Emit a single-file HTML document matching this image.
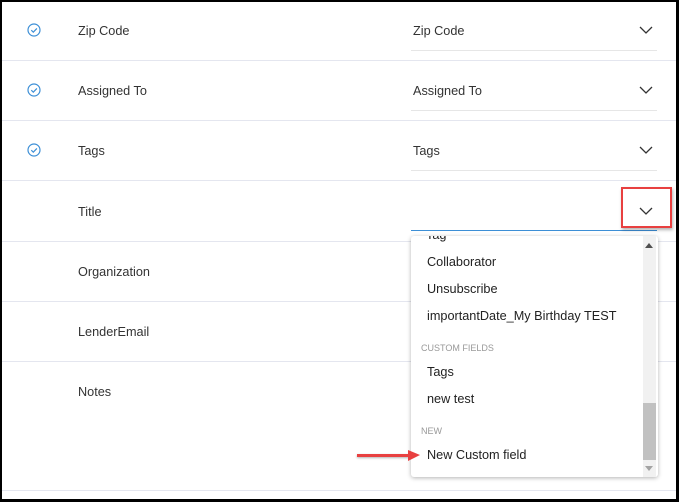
<!DOCTYPE html>
<html><head><style>
body{margin:0;width:679px;height:502px;overflow:hidden;background:#fff;font-family:"Liberation Sans",sans-serif;}
.frame{position:absolute;left:0;top:0;width:679px;height:502px;box-sizing:border-box;border:2px solid #000;border-right-width:3px;border-bottom-width:3px}
.t{position:absolute;font-size:12.7px;color:#333;line-height:16px}
.sep{position:absolute;left:2px;right:3px;height:1px;background:#e4e6ef}
.ul{position:absolute;left:411px;width:246px;height:1px;background:#e6e6e6}
.chev{position:absolute;left:639px}
.di{position:absolute;left:427px;font-size:12.7px;color:#222;line-height:16px}
.dh{position:absolute;left:421px;font-size:9px;color:#999;line-height:12px}
</style></head><body>
<div class="sep" style="top:60px"></div>
<div class="sep" style="top:120px"></div>
<div class="sep" style="top:180px"></div>
<div class="sep" style="top:241px"></div>
<div class="sep" style="top:301px"></div>
<div class="sep" style="top:361px"></div>
<div class="sep" style="top:490px"></div>

<svg style="position:absolute;left:27px;top:23px" width="14" height="14"><circle cx="7" cy="7" r="6" fill="none" stroke="#3d8fd6" stroke-width="1.2"/><path d="M4.3 7.2l2 2 3.6-3.8" fill="none" stroke="#3d8fd6" stroke-width="1.2"/></svg>
<svg style="position:absolute;left:27px;top:83px" width="14" height="14"><circle cx="7" cy="7" r="6" fill="none" stroke="#3d8fd6" stroke-width="1.2"/><path d="M4.3 7.2l2 2 3.6-3.8" fill="none" stroke="#3d8fd6" stroke-width="1.2"/></svg>
<svg style="position:absolute;left:27px;top:143px" width="14" height="14"><circle cx="7" cy="7" r="6" fill="none" stroke="#3d8fd6" stroke-width="1.2"/><path d="M4.3 7.2l2 2 3.6-3.8" fill="none" stroke="#3d8fd6" stroke-width="1.2"/></svg>

<div class="t" style="left:78px;top:23px">Zip Code</div>
<div class="t" style="left:78px;top:83px">Assigned To</div>
<div class="t" style="left:78px;top:143px">Tags</div>
<div class="t" style="left:78px;top:204px">Title</div>
<div class="t" style="left:78px;top:264px">Organization</div>
<div class="t" style="left:78px;top:324px">LenderEmail</div>
<div class="t" style="left:78px;top:384px">Notes</div>

<div class="t" style="left:413px;top:23px">Zip Code</div>
<div class="t" style="left:413px;top:83px">Assigned To</div>
<div class="t" style="left:413px;top:143px">Tags</div>
<div class="ul" style="top:50px"></div>
<div class="ul" style="top:110px"></div>
<div class="ul" style="top:170px"></div>
<div class="ul" style="top:230px;background:#3d8fd6"></div>
<svg class="chev" style="top:26px" width="14" height="8"><path d="M1 1l6 6 6-6" fill="none" stroke="#333" stroke-width="1.3"/></svg>
<svg class="chev" style="top:86px" width="14" height="8"><path d="M1 1l6 6 6-6" fill="none" stroke="#333" stroke-width="1.3"/></svg>
<svg class="chev" style="top:146px" width="14" height="8"><path d="M1 1l6 6 6-6" fill="none" stroke="#333" stroke-width="1.3"/></svg>
<svg class="chev" style="top:207px" width="14" height="8"><path d="M1 1l6 6 6-6" fill="none" stroke="#333" stroke-width="1.3"/></svg>
<div style="position:absolute;left:621px;top:187px;width:47px;height:37px;border:2px solid #e84040;box-shadow:1px 2px 3px rgba(0,0,0,.3)"></div>

<div style="position:absolute;left:411px;top:236px;width:247px;height:241px;background:#fff;border-radius:3px;box-shadow:0 1px 4px rgba(0,0,0,.3);overflow:hidden">
<div style="position:absolute;left:15px;top:-8px;font-size:12.7px;color:#222">Tag</div>
<div style="position:absolute;right:2px;top:0;width:13px;height:241px;background:#f1f1f1"></div>
<div style="position:absolute;right:2px;top:167px;width:13px;height:57px;background:#c1c1c1"></div>
<div style="position:absolute;left:234px;top:7px;width:0;height:0;border-left:4px solid transparent;border-right:4px solid transparent;border-bottom:5px solid #505050"></div>
<div style="position:absolute;left:234px;top:230px;width:0;height:0;border-left:4px solid transparent;border-right:4px solid transparent;border-top:5px solid #a3a3a3"></div>
</div>
<div class="di" style="top:254px">Collaborator</div>
<div class="di" style="top:281px">Unsubscribe</div>
<div class="di" style="top:308px">importantDate_My Birthday TEST</div>
<div class="dh" style="top:342px">CUSTOM FIELDS</div>
<div class="di" style="top:364px">Tags</div>
<div class="di" style="top:391px">new test</div>
<div class="dh" style="top:425px">NEW</div>
<div class="di" style="top:447px">New Custom field</div>

<div style="position:absolute;left:357px;top:454px;width:52px;height:3px;background:#e84040;box-shadow:0 1px 2px rgba(0,0,0,.3)"></div>
<div style="position:absolute;left:408px;top:450px;width:0;height:0;border-top:5px solid transparent;border-bottom:6px solid transparent;border-left:12px solid #e84040"></div>

<div class="frame"></div>
</body></html>
